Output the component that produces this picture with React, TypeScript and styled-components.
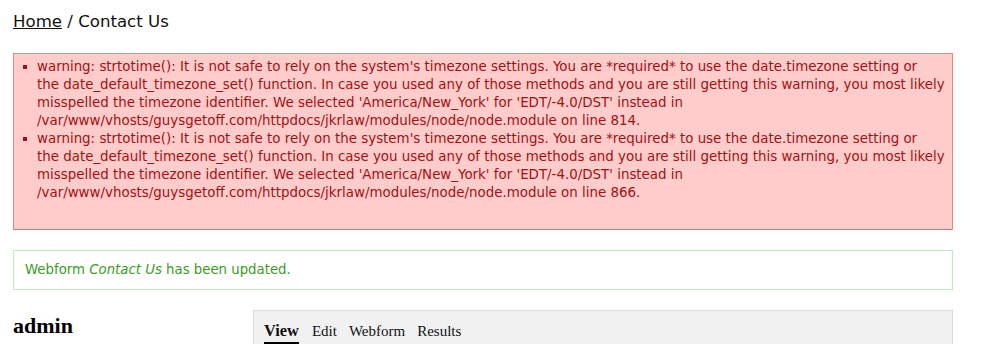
import React from 'react';
import styled, { createGlobalStyle } from 'styled-components';

const GlobalStyle = createGlobalStyle`
  html, body { margin: 0; padding: 0; background: #fff; }
  body { font-family: "DejaVu Sans", Verdana, sans-serif; color: #000; }
`;

const Page = styled.div`
  width: 940px;
  padding: 8px 0 0 13px;
`;

const Breadcrumb = styled.div`
  font-size: 16.6px;
  line-height: 27px;
  color: #111;
  a { color: #111; text-decoration: underline; }
`;

const ErrorBox = styled.div`
  margin-top: 18px;
  background: #ffcccc;
  border: 1px solid #e58a8a;
  border-bottom-color: #e07070;
  padding: 4px 0 27px 0;
`;

const List = styled.ul`
  margin: 0;
  padding: 0 0 0 23px;
  list-style: none;
`;

const Item = styled.li`
  position: relative;
  font-size: 13.4px;
  line-height: 18px;
  color: #a50f0f;
  white-space: nowrap;
  &::before {
    content: '';
    position: absolute;
    left: -14px;
    top: 7px;
    width: 4px;
    height: 4px;
    background: #a50f0f;
  }
`;

const StatusBox = styled.div`
  margin-top: 20px;
  border: 1px solid #bfe8bf;
  padding: 10px 11px;
  font-size: 13.3px;
  line-height: 18px;
  color: #3a9d23;
  em { font-style: italic; }
`;

const Bottom = styled.div`
  display: flex;
  margin-top: 20px;
`;

const Author = styled.h2`
  margin: 4px 0 0 0;
  width: 240px;
  font-family: "Liberation Serif", "Times New Roman", serif;
  font-weight: bold;
  font-size: 22px;
  line-height: 24px;
`;

const TabPanel = styled.div`
  flex: 1;
  height: 40px;
  background: #f1f1f1;
  border: 1px solid #dcdcdc;
  border-bottom: none;
  padding: 10px 0 0 10px;
  display: flex;
  gap: 12px;
`;

const Tab = styled.span<{ active?: boolean }>`
  font-family: "Liberation Serif", "Times New Roman", serif;
  line-height: 20px;
  height: 21px;
  font-weight: ${p => (p.active ? 'bold' : 'normal')};
  font-size: ${p => (p.active ? '16.4px' : '15px')};
  margin-right: ${p => (p.active ? '1px' : '0')};
  color: #111;
  border-bottom: 3px solid ${p => (p.active ? '#000' : 'transparent')};
`;

const warning = [
  "warning: strtotime(): It is not safe to rely on the system's timezone settings. You are *required* to use the date.timezone setting or",
  "the date_default_timezone_set() function. In case you used any of those methods and you are still getting this warning, you most likely",
  "misspelled the timezone identifier. We selected 'America/New_York' for 'EDT/-4.0/DST' instead in",
];

export default function App() {
  return (
    <>
      <GlobalStyle />
      <Page>
        <Breadcrumb><a href="#">Home</a> / Contact Us</Breadcrumb>
        <ErrorBox>
          <List>
            {['814', '866'].map(line => (
              <Item key={line}>
                {warning.map(t => (<React.Fragment key={t}>{t}<br /></React.Fragment>))}
                /var/www/vhosts/guysgetoff.com/httpdocs/jkrlaw/modules/node/node.module on line {line}.
              </Item>
            ))}
          </List>
        </ErrorBox>
        <StatusBox>Webform <em>Contact Us</em> has been updated.</StatusBox>
        <Bottom>
          <Author>admin</Author>
          <TabPanel>
            <Tab active>View</Tab>
            <Tab>Edit</Tab>
            <Tab>Webform</Tab>
            <Tab>Results</Tab>
          </TabPanel>
        </Bottom>
      </Page>
    </>
  );
}
